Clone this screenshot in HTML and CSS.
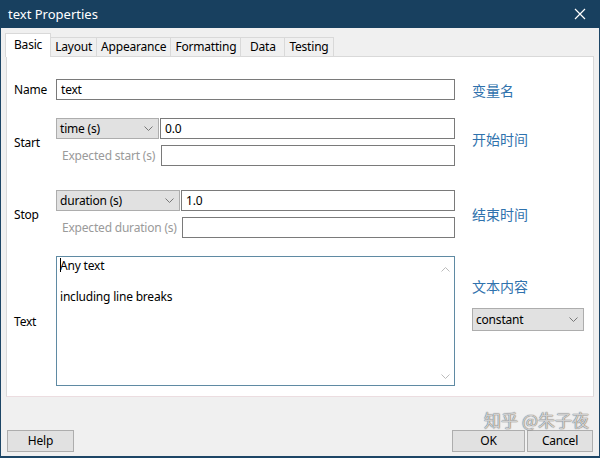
FILE: index.html
```html
<!DOCTYPE html>
<html lang="en">
<head>
    <meta charset="UTF-8">
    <title>text Properties</title>
    <link rel="stylesheet" href="styles.css">
</head>
<body>
    <div class="window">
        <div class="titlebar">
            <span class="title">text Properties</span>
            <svg class="close" width="12" height="12" viewBox="0 0 12 12"><path d="M1 1L11 11M11 1L1 11" stroke="#fff" stroke-width="1.2"/></svg>
        </div>

        <div class="tabs">
            <div class="tab active">Basic</div>
            <div class="tab">Layout</div>
            <div class="tab">Appearance</div>
            <div class="tab">Formatting</div>
            <div class="tab">Data</div>
            <div class="tab">Testing</div>
        </div>

        <div class="panel">
            <div class="row row-name">
                <div class="label">Name</div>
                <div class="field"><div class="input">text</div></div>
                <div class="note">变量名</div>
            </div>

            <div class="row row-start">
                <div class="label">Start</div>
                <div class="field">
                    <div class="pair">
                        <div class="select sel-start">time (s)<svg class="chev" width="9" height="5" viewBox="0 0 9 5"><path d="M0.5 0.5L4.5 4.5L8.5 0.5" fill="none" stroke="#777"/></svg></div>
                        <div class="input">0.0</div>
                    </div>
                    <div class="pair expected">
                        <div class="hint hint-start">Expected start (s)</div>
                        <div class="input"></div>
                    </div>
                </div>
                <div class="note note-start">开始时间</div>
            </div>

            <div class="row row-stop">
                <div class="label">Stop</div>
                <div class="field">
                    <div class="pair">
                        <div class="select sel-stop">duration (s)<svg class="chev" width="9" height="5" viewBox="0 0 9 5"><path d="M0.5 0.5L4.5 4.5L8.5 0.5" fill="none" stroke="#777"/></svg></div>
                        <div class="input">1.0</div>
                    </div>
                    <div class="pair expected">
                        <div class="hint hint-stop">Expected duration (s)</div>
                        <div class="input"></div>
                    </div>
                </div>
                <div class="note">结束时间</div>
            </div>

            <div class="row row-text">
                <div class="label">Text</div>
                <div class="field">
                    <div class="textarea">
                        <div class="content"><span class="caret"></span>Any text<br><br>including line breaks</div>
                        <div class="scroll">
                            <svg width="9" height="5" viewBox="0 0 9 5"><path d="M0.5 4.5L4.5 0.5L8.5 4.5" fill="none" stroke="#bbb"/></svg>
                            <svg width="9" height="5" viewBox="0 0 9 5"><path d="M0.5 0.5L4.5 4.5L8.5 0.5" fill="none" stroke="#bbb"/></svg>
                        </div>
                    </div>
                </div>
                <div class="note note-text">
                    <div>文本内容</div>
                    <div class="select sel-const">constant<svg class="chev" width="9" height="5" viewBox="0 0 9 5"><path d="M0.5 0.5L4.5 4.5L8.5 0.5" fill="none" stroke="#777"/></svg></div>
                </div>
            </div>
        </div>

        <div class="footer">
            <div class="btn btn-help">Help</div>
            <div class="btn-group">
                <div class="btn btn-ok">OK</div>
                <div class="btn btn-cancel">Cancel</div>
            </div>
        </div>

        <div class="watermark">知乎 @朱子夜</div>
    </div>
</body>
</html>
```

FILE: styles.css
```css
*{padding: 0; margin: 0; box-sizing: border-box;}
body{width: 600px; height: 458px; overflow: hidden; font-family: "Noto Sans", "Noto Sans CJK SC", sans-serif; font-size: 12px; letter-spacing: -0.2px; color: #000;}

.window{position: relative; width: 600px; height: 458px; background: #f0f0f0; border: 1px solid #1d4666; border-top: 0; border-bottom-width: 2px;}

.titlebar{display: flex; align-items: center; justify-content: space-between; height: 28px; margin: 0 -1px; padding: 0 14px 0 8px; background: #18405f; color: #fff;}
.title{font-size: 13px; letter-spacing: 0;}

.tabs{display: flex; align-items: flex-end; height: 28px; padding-left: 4px;}
.tab{min-width: 45px; height: 19px; padding: 0 4px; margin-right: -1px; line-height: 18px; text-align: center; background: #f0f0f0; border: 1px solid #d9d9d9; border-bottom: 0;}
.tab.active{position: relative; z-index: 1; height: 24px; margin-bottom: -1px; padding: 0 8px; line-height: 22px; background: #fff;}

.panel{height: 341px; margin: 0 5px; padding-left: 7px; background: #fff; border: 1px solid #d9d9d9; border-bottom-color: #ecdde0;}

.row{display: flex; align-items: center;}
.row-name{margin-top: 22px;}
.row-start{margin-top: 18px;}
.row-stop{margin-top: 24px;}
.row-text{margin-top: 18px;}

.label{width: 42px;}
.field{width: 399px;}
.note{padding-left: 17px; font-family: "Noto Sans CJK SC", sans-serif; font-size: 14px; letter-spacing: 0; color: #2f72ad;}
.note-start{margin-bottom: 6px;}

.input{flex: 1; height: 21px; padding-left: 4px; line-height: 19px; border: 1px solid #7a7a7a; background: #fff;}
.pair{display: flex; gap: 1px;}
.expected{margin-top: 6px;}
.hint{padding-left: 6px; color: #9a9a9a; line-height: 21px;}
.hint-start{width: 104px;}
.hint-stop{width: 125px;}

.select{display: flex; align-items: center; justify-content: space-between; height: 21px; padding: 0 5px 0 3px; background: #e1e1e1; border: 1px solid #adadad;}
.sel-start{width: 103px;}
.sel-stop{width: 124px;}
.sel-const{width: 112px; height: 23px; margin-top: 12px; font-family: "Noto Sans", sans-serif; font-size: 12px; letter-spacing: -0.2px; color: #000;}

.textarea{display: flex; height: 130px; border: 1px solid #5f8aa3; background: #fff;}
.textarea .content{flex: 1; padding: 1px 3px; line-height: 15.5px;}
.caret{display: inline-block; width: 1px; height: 14px; margin-right: -1px; vertical-align: -2px; background: #000;}
.scroll{display: flex; flex-direction: column; justify-content: space-between; align-items: center; width: 17px; padding: 10px 0 6px;}

.note-text{align-self: flex-start; padding-top: 20px;}

.footer{display: flex; justify-content: space-between; margin-top: 33px; padding: 0 6px;}
.btn{height: 22px; line-height: 20px; text-align: center; background: #e1e1e1; border: 1px solid #adadad;}
.btn-help{width: 67px;}
.btn-group{display: flex; gap: 2px;}
.btn-ok{width: 73px;}
.btn-cancel{width: 66px;}

.watermark{position: absolute; right: 10px; bottom: 26px; font-family: "Noto Sans CJK SC", sans-serif; font-size: 17px; line-height: 20px; letter-spacing: 0; color: rgba(255,255,255,0.7); text-shadow: 0 0 1px #666, 0 0 1px #666;}
```
